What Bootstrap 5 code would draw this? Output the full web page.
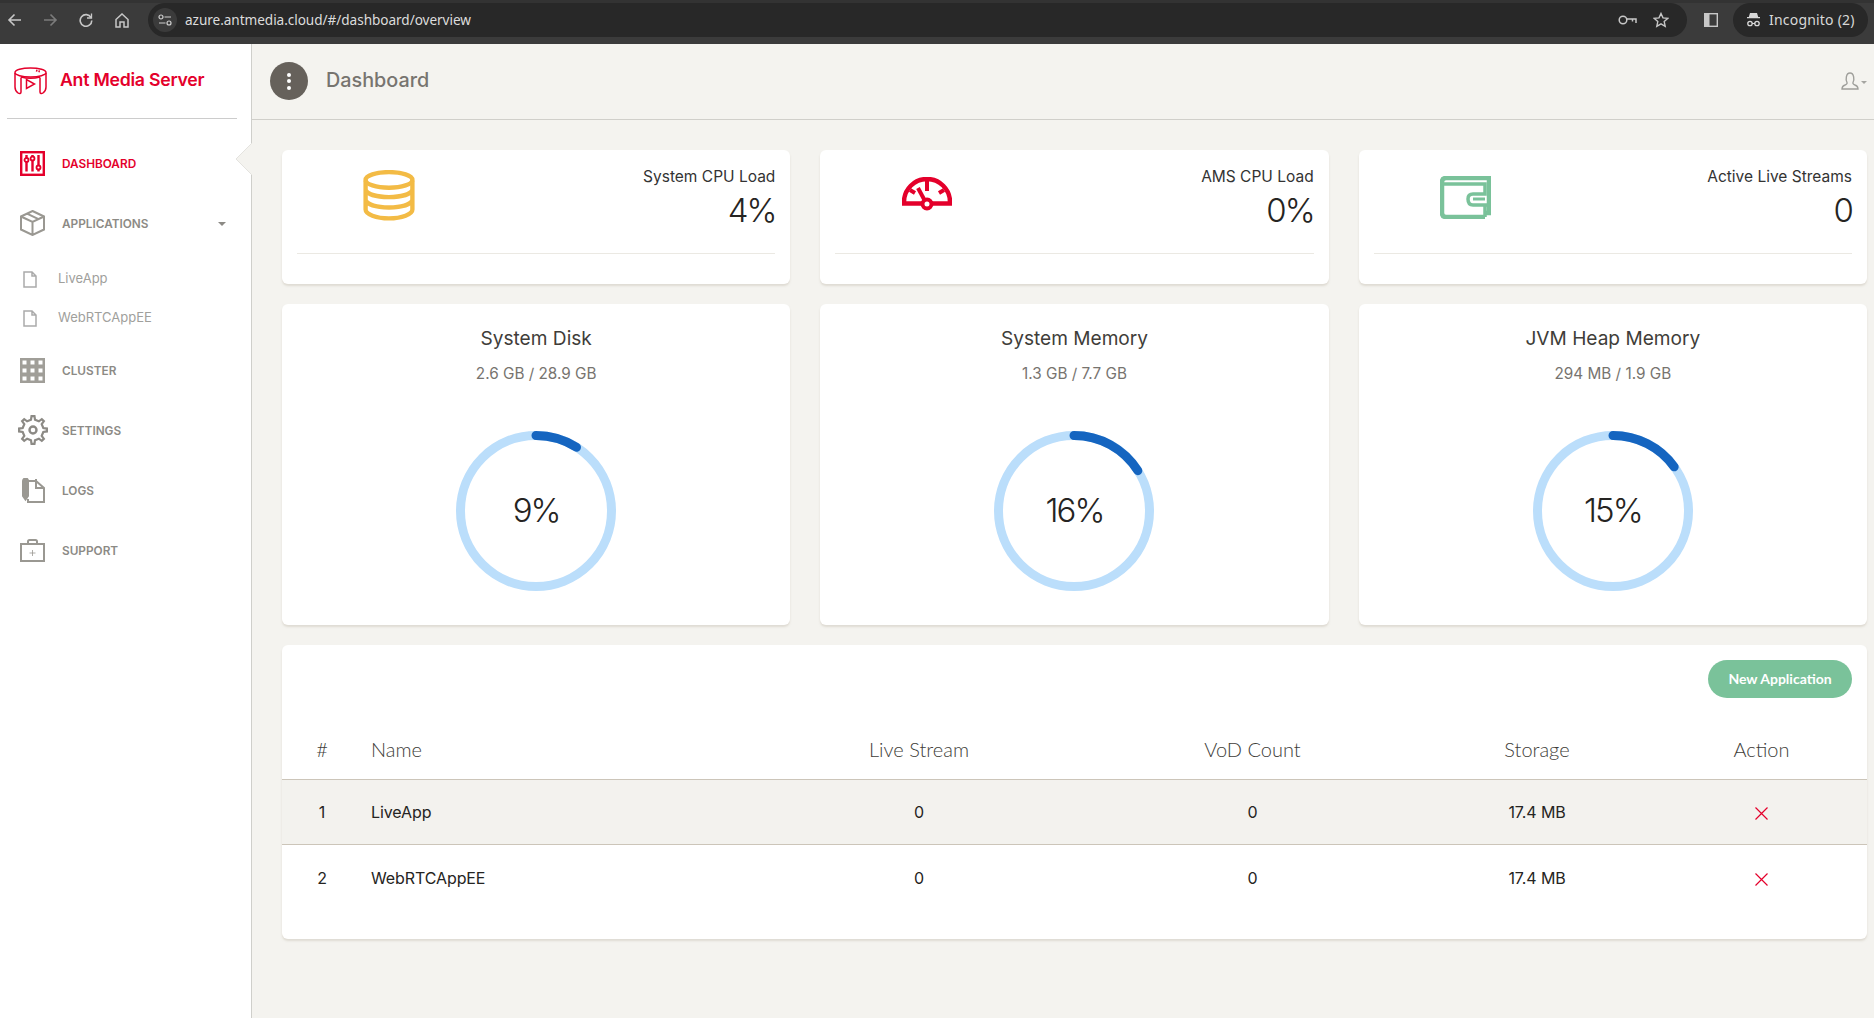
<!doctype html>
<html lang="en">
<head>
<meta charset="utf-8">
<title>Ant Media Server</title>
<link rel="stylesheet" href="https://cdn.jsdelivr.net/npm/bootstrap@5.3.0/dist/css/bootstrap.min.css">
<style>
html,body{height:100%;overflow:hidden}
body{background:#f4f3ef;font-family:"Inter","Liberation Sans",sans-serif;color:#252422}
.chrome-bar{height:44px;background:#3b3b3b;border-top:3px solid #333;padding-bottom:7px;color:#c7c7c7;font-family:"Noto Sans",sans-serif;padding-right:6px}
.chrome-nav{width:36px;flex:none}
.chrome-nav.first{width:32px;padding-right:4px}
.url-pill{flex:1;height:34px;margin-left:8px;background:#282828;border-radius:17px;padding-left:5px;padding-right:14px}
.tune-dot{width:24px;height:24px;border-radius:50%;background:#3b3b3b;margin-right:8px}
.url-text{font-size:13.6px;color:#dcdcdc;letter-spacing:-.05px}
.side-toggle{width:46px;padding-left:2px}
.inc-pill{height:34px;background:#282828;border-radius:17px;width:135px;padding-left:13px;padding-bottom:1px;font-size:14px;letter-spacing:.2px;color:#d8d8d8;gap:8px}
.side-panel{width:252px;flex:none;background:#fff;border-right:1px solid #cfcfcb;position:relative}
.side-notch{position:absolute;left:235px;top:99px}
.brand-box{height:75px;margin:0 14px 0 7px;padding-left:7px;border-bottom:1px solid #ccc;gap:13px}
.brand-text{font-size:17.7px;font-weight:600;color:#e4002b;letter-spacing:-.25px;font-family:"Inter",sans-serif;padding-bottom:1px}
.menu-wrap{padding-top:14px}
.menu-link{height:60px;padding-left:20px;padding-top:3px;color:#8c8a85;font-size:11.8px;font-weight:600;text-decoration:none;position:relative}
.menu-link .ico{width:25px;display:flex;justify-content:center;flex:none;margin-right:17px;margin-top:-3px}
.menu-link .ico svg{flex:none}
.menu-link.is-active{color:#e4002b}
.menu-caret{position:absolute;left:218px;top:29px;border:4px solid transparent;border-top-color:#8c8a85;border-bottom:0}
.sub-wrap{padding:5.5px 0 3.5px}
.sub-link{height:39px;padding-left:23px;padding-top:2px;color:#a0a09c;font-size:13px;text-decoration:none}
.sub-link svg{margin-right:21px}
.main-panel{flex:1;min-width:0}
.top-head{height:76px;border-bottom:1px solid #d0cfca;padding:0 7px 1px 18px}
.dots-btn{width:38px;height:38px;border-radius:50%;background:#66615b;border:0;gap:2.5px;padding:0}
.dots-btn i{width:4px;height:4px;background:#fff;border-radius:50%;display:block}
.head-title{font-size:19.8px;font-weight:550;color:#77746f;margin:0 0 0 18px}
.head-user{gap:2px}
.head-caret{border:3.5px solid transparent;border-top-color:#a5a5a1;border-bottom:0;margin-top:2px}
.page-body{padding:30px 7px 0 30px}
.card-grid{--bs-gutter-x:30px;--bs-gutter-y:20px}
.paper{background:#fff;border:0;border-radius:6px;box-shadow:0 2px 2px rgba(204,197,185,.5)}
.stat-paper{height:134px;padding:0 15px}
.stat-top{height:104px;border-bottom:1px solid #ebe9e3;padding-top:16px}
.stat-icon{width:52px;margin-left:66px;height:54px;margin-top:4px}
.stat-icon.gauge-ico{margin-top:11px;margin-left:67px}
.stat-icon.wallet-ico{margin-top:10px}
.stat-icon svg{display:block}
.stat-text{padding-top:1px}
.stat-label{font-size:15.5px;line-height:20px;color:#333}
.stat-value{font-size:33px;font-weight:350;line-height:40px;margin-top:3px;color:#252422;letter-spacing:-2px}
.gauge-paper{height:321px;text-align:center;padding-top:21px}
.gauge-title{font-size:19.1px;line-height:26px;color:#403d39;font-weight:400;margin:0}
.gauge-sub{font-size:15.3px;line-height:22px;color:#77746f;margin:12px 0 0}
.gauge-ring{width:160px;height:160px;margin:46px auto 0;position:relative}
.gauge-ring svg{display:block}
.gauge-num{font-size:33px;font-weight:350;color:#252422;letter-spacing:-2px}
.table-paper{height:294px;padding-top:15px}
.new-btn{background:#7ac29a;border:0;color:#fff;font-family:"Lato",sans-serif;font-weight:700;font-size:14px;height:38px;width:144px;border-radius:19px;padding:0 0 2px;margin-right:15px}
.new-btn:hover{background:#7ac29a;color:#fff}
.app-table{table-layout:fixed;width:100%;margin:22px 0 0;--bs-table-bg:transparent;--bs-table-color:#252422}
.app-table th{font-family:"Lato",sans-serif;font-weight:300;font-size:20px;color:#403d39;height:59px;vertical-align:middle;padding:0;border-bottom:1px solid #ccc5b9}
.app-table td{height:65.5px;font-size:16px;vertical-align:middle;padding:1px 0 0;border-bottom:1px solid #ccc5b9;letter-spacing:-.1px}
.app-table tr:last-child td{border-bottom:0;padding-top:0}
.app-table tbody tr:first-child td{background:#f3f2ee}
.cell-name{padding-left:9px !important}
</style>
</head>
<body>
<div class="d-flex flex-column vh-100">
  <div class="chrome-bar d-flex align-items-center">
    <div class="chrome-nav first d-flex justify-content-center"><svg width="15" height="14" viewBox="0 0 15 14" fill="none" stroke="#c7c7c7" stroke-width="1.6"><path d="M14 7H2M7.5 1.5 2 7l5.5 5.5"/></svg></div>
    <div class="chrome-nav d-flex justify-content-center"><svg width="15" height="14" viewBox="0 0 15 14" fill="none" stroke="#7c7c7c" stroke-width="1.6"><path d="M1 7h12M7.500 1.500 13 7l-5.500 5.500"/></svg></div>
    <div class="chrome-nav d-flex justify-content-center"><svg width="14" height="14" viewBox="0 0 14 14" fill="none" stroke="#c7c7c7" stroke-width="1.6"><path d="M12 4.500A5.800 5.800 0 1 0 12.800 7.500"/><path d="M12.500 .5v4.500H8" stroke-width="1.300"/></svg></div>
    <div class="chrome-nav d-flex justify-content-center"><svg width="14" height="15" viewBox="0 0 14 15" fill="none" stroke="#c7c7c7" stroke-width="1.500"><path d="M1 6.500 7 1l6 5.500V14H9V9H5v5H1z"/></svg></div>
    <div class="url-pill d-flex align-items-center">
      <div class="tune-dot d-flex align-items-center justify-content-center"><svg width="14" height="12" viewBox="0 0 14 12" fill="none" stroke="#d0d0d0" stroke-width="1.200"><circle cx="3" cy="3" r="2"/><path d="M6.500 3H13M1 9h6.500"/><circle cx="11" cy="9" r="2"/></svg></div>
      <span class="url-text">azure.antmedia.cloud/#/dashboard/overview</span>
      <svg class="ms-auto me-3" width="19" height="11" viewBox="0 0 19 11" fill="none" stroke="#c7c7c7" stroke-width="1.500"><circle cx="5" cy="5" r="3.800"/><path d="M9 4h9v4M14.500 4v2.500"/></svg>
      <svg class="me-1" width="16" height="16" viewBox="0 0 16 16" fill="none" stroke="#c7c7c7" stroke-width="1.400"><path d="m8 1.500 2 4.400 4.700.5-3.500 3.200 1 4.700L8 11.900l-4.200 2.400 1-4.700L1.300 6.400 6 5.900z"/></svg>
    </div>
    <div class="side-toggle d-flex justify-content-center"><svg width="14" height="14" viewBox="0 0 14 14"><rect x=".7" y=".7" width="12.600" height="12.600" fill="none" stroke="#c7c7c7" stroke-width="1.400"/><rect x="1" y="1" width="4.500" height="12" fill="#c7c7c7"/></svg></div>
    <div class="inc-pill d-flex align-items-center"><svg width="15" height="15" viewBox="0 0 15 15" fill="#d8d8d8"><path d="M4 1h7l1.200 4H14v1.300H1V5h1.800z"/><circle cx="4" cy="11.500" r="2.200" fill="none" stroke="#d8d8d8" stroke-width="1.300"/><circle cx="11" cy="11.500" r="2.200" fill="none" stroke="#d8d8d8" stroke-width="1.300"/><path d="M6 11h3v1H6z"/></svg><span>Incognito (2)</span></div>
  </div>
  <div class="d-flex flex-grow-1 overflow-hidden">
    <aside class="side-panel">
      <svg class="side-notch" width="17" height="32" viewBox="0 0 17 32"><path d="M17 0 1 16l16 16z" fill="#f4f3ef"/><path d="M17 0 1 16l16 16" fill="none" stroke="#e4e3df"/></svg>
      <div class="brand-box d-flex align-items-center">
        <svg width="33" height="28" viewBox="0 0 33 28" fill="none" stroke="#e4002b" stroke-width="1.500"><ellipse cx="16.500" cy="5.500" rx="15.500" ry="4.500"/><path d="M1 6v14c0 3.500 1.500 5 3 6 1.500 1 3 .8 3-1V10.500M32 6v14c0 3.500-1.500 5-3 6-1.500 1-3 .8-3-1V10.500M7 10q9.500 2.500 19 0"/><path d="M12.500 12.500v9l8-4.500z"/><path d="M22 3.500l4 1" stroke-width="2" stroke-dasharray="1.500 1"/></svg>
        <span class="brand-text">Ant Media Server</span>
      </div>
      <nav class="menu-wrap nav flex-column flex-nowrap">
        <a class="menu-link is-active d-flex align-items-center" href="#"><span class="ico"><svg width="25" height="25" viewBox="0 0 25 25" fill="none" stroke="#e4002b"><rect x="1.200" y="1.200" width="22.600" height="22.600" stroke-width="2.400"/><g stroke-width="2.400"><path d="M6.500 4v16.500M12.500 4v16.500M18.500 4v16.500"/></g><g fill="#fff" stroke-width="1.800"><circle cx="6.500" cy="9" r="2"/><circle cx="12.500" cy="7.500" r="2"/><circle cx="18.500" cy="16.500" r="2"/></g></svg></span>DASHBOARD</a>
        <a class="menu-link d-flex align-items-center" href="#"><span class="ico"><svg width="25" height="26" viewBox="0 0 25 26" fill="none" stroke="#9a9892" stroke-width="2"><path d="M12.500 1 24 6.500v13L12.500 25 1 19.500v-13zM1 6.500 12.500 12 24 6.500M12.500 12v13M7 3.700l11.500 5.500"/></svg></span>APPLICATIONS<i class="menu-caret"></i></a>
        <div class="sub-wrap">
          <a class="sub-link d-flex align-items-center" href="#"><svg width="14" height="17" viewBox="0 0 14 17" fill="none" stroke="#aaa" stroke-width="1.500"><path d="M1 1h8l4 4v11H1zM9 1v4h4"/></svg>LiveApp</a>
          <a class="sub-link d-flex align-items-center" href="#"><svg width="14" height="17" viewBox="0 0 14 17" fill="none" stroke="#aaa" stroke-width="1.500"><path d="M1 1h8l4 4v11H1zM9 1v4h4"/></svg>WebRTCAppEE</a>
        </div>
        <a class="menu-link d-flex align-items-center" href="#"><span class="ico"><svg width="25" height="25" viewBox="0 0 25 25" fill-rule="evenodd"><path fill="#a09e98" d="M0 0h25v25H0zM2.500 2.500v4h4v-4zm8 0v4h4v-4zm8 0v4h4v-4zm-16 8v4h4v-4zm8 0v4h4v-4zm8 0v4h4v-4zm-16 8v4h4v-4zm8 0v4h4v-4zm8 0v4h4v-4z"/></svg></span>CLUSTER</a>
        <a class="menu-link d-flex align-items-center" href="#"><span class="ico"><svg width="30" height="30" viewBox="0 0 30 30" fill="none" stroke="#8c8a85" stroke-width="2.200"><polygon points="13,4.700 13.540,1.100 16.460,1.100 17,4.700 20.870,6.300 23.800,4.120 25.880,6.200 23.700,9.130 25.300,13 28.900,13.540 28.900,16.460 25.300,17 23.700,20.870 25.880,23.800 23.800,25.880 20.870,23.700 17,25.300 16.460,28.900 13.540,28.900 13,25.300 9.130,23.700 6.200,25.880 4.120,23.800 6.300,20.870 4.700,17 1.100,16.460 1.100,13.540 4.700,13 6.300,9.130 4.120,6.200 6.200,4.120 9.130,6.300"/><circle cx="15" cy="15" r="3.500" stroke-width="2.400"/></svg></span>SETTINGS</a>
        <a class="menu-link d-flex align-items-center" href="#"><span class="ico"><svg width="24" height="25" viewBox="0 0 24 25" fill="none" stroke="#9a9892" stroke-width="2"><path d="M7 3h8l8 7v14H7v-3"/><path d="M15 1v9h8"/><path d="M2 3a2.500 2.500 0 0 1 5 0v15l-2.500 3.500L2 18z" fill="#9a9892"/></svg></span>LOGS</a>
        <a class="menu-link d-flex align-items-center" href="#"><span class="ico"><svg width="25" height="23" viewBox="0 0 25 23" fill="none" stroke="#9a9892" stroke-width="2"><path d="M1 5h23v17H1zM8 5V2.500Q8 1 9.500 1h6Q17 1 17 2.500V5"/><path d="M12.500 11v6M9.500 14h6" stroke-width=".8"/></svg></span>SUPPORT</a>
      </nav>
    </aside>
    <main class="main-panel">
      <header class="top-head d-flex align-items-center">
        <button class="dots-btn d-flex flex-column align-items-center justify-content-center" type="button" aria-label="Menu"><i></i><i></i><i></i></button>
        <h1 class="head-title">Dashboard</h1>
        <div class="head-user ms-auto d-flex align-items-center"><svg width="18" height="18" viewBox="0 0 18 18" fill="none" stroke="#9f9f9b" stroke-width="1.400"><path d="M6 10.500C4.500 8 4.800 1 9 1s4.500 7 3 9.500c-.5 1 .5 1.800 2 2.500 2 .8 3 1.500 3 4H1c0-2.500 1-3.200 3-4 1.500-.7 2.500-1.500 2-2.500z"/></svg><i class="head-caret"></i></div>
      </header>
      <div class="page-body">
        <div class="row card-grid">
          <div class="col-4"><div class="card paper stat-paper"><div class="stat-top d-flex justify-content-between">
            <div class="stat-icon"><svg width="52" height="51" viewBox="0 0 50 49" fill="none" stroke="#f3bb45" stroke-width="4.200"><ellipse cx="25" cy="9.500" rx="22.500" ry="7.500"/><path d="M2.500 10v28c0 4.500 10 8.500 22.500 8.500s22.500-4 22.500-8.500V10M2.500 19c2 4.500 11 7 22.500 7s20.500-2.500 22.500-7M2.500 29c2 4.500 11 7 22.500 7s20.500-2.500 22.500-7"/></svg></div>
            <div class="stat-text text-end"><div class="stat-label">System CPU Load</div><div class="stat-value">4%</div></div>
          </div></div></div>
          <div class="col-4"><div class="card paper stat-paper"><div class="stat-top d-flex justify-content-between">
            <div class="stat-icon gauge-ico"><svg width="50" height="34" viewBox="0 0 50 34" fill="none" stroke="#e4002b" stroke-width="4.500"><path d="M2 26.500V25a23 23 0 0 1 46 0v1.500z"/><path d="M25 4v10M8 13l5 3M42 13l-5 3" stroke-width="4"/><path d="M16 11l7 13" stroke-width="4"/><circle cx="25" cy="27" r="4.500" fill="#fff" stroke-width="4"/></svg></div>
            <div class="stat-text text-end"><div class="stat-label">AMS CPU Load</div><div class="stat-value">0%</div></div>
          </div></div></div>
          <div class="col-4"><div class="card paper stat-paper"><div class="stat-top d-flex justify-content-between">
            <div class="stat-icon wallet-ico"><svg width="51" height="43" viewBox="0 0 51 43" fill="none" stroke="#7ac29a" stroke-width="4.500"><path d="M45 41H6q-4 0-4-4V6q0-4 4-4h43v35h-4"/><path d="M2 8h43v10H33q-5 0-5 5 0 6 5 6h16M45 29v12" stroke-width="3.500"/><path d="M33 23h12" stroke-width="3"/></svg></div>
            <div class="stat-text text-end"><div class="stat-label">Active Live Streams</div><div class="stat-value">0</div></div>
          </div></div></div>

          <div class="col-4"><div class="card paper gauge-paper">
            <h2 class="gauge-title">System Disk</h2><p class="gauge-sub">2.6 GB / 28.9 GB</p>
            <div class="gauge-ring"><svg width="160" height="160" viewBox="0 0 160 160" fill="none" stroke-width="9"><circle cx="80" cy="80" r="75.500" stroke="#bbdefb"/><circle cx="80" cy="80" r="75.500" stroke="#1565c0" stroke-linecap="round" stroke-dasharray="42.700 474.400" transform="rotate(-90 80 80)"/></svg><span class="gauge-num position-absolute top-50 start-50 translate-middle">9%</span></div>
          </div></div>
          <div class="col-4"><div class="card paper gauge-paper">
            <h2 class="gauge-title">System Memory</h2><p class="gauge-sub">1.3 GB / 7.7 GB</p>
            <div class="gauge-ring"><svg width="160" height="160" viewBox="0 0 160 160" fill="none" stroke-width="9"><circle cx="80" cy="80" r="75.500" stroke="#bbdefb"/><circle cx="80" cy="80" r="75.500" stroke="#1565c0" stroke-linecap="round" stroke-dasharray="75.900 474.400" transform="rotate(-90 80 80)"/></svg><span class="gauge-num position-absolute top-50 start-50 translate-middle">16%</span></div>
          </div></div>
          <div class="col-4"><div class="card paper gauge-paper">
            <h2 class="gauge-title">JVM Heap Memory</h2><p class="gauge-sub">294 MB / 1.9 GB</p>
            <div class="gauge-ring"><svg width="160" height="160" viewBox="0 0 160 160" fill="none" stroke-width="9"><circle cx="80" cy="80" r="75.500" stroke="#bbdefb"/><circle cx="80" cy="80" r="75.500" stroke="#1565c0" stroke-linecap="round" stroke-dasharray="71.200 474.400" transform="rotate(-90 80 80)"/></svg><span class="gauge-num position-absolute top-50 start-50 translate-middle">15%</span></div>
          </div></div>

          <div class="col-12"><div class="card paper table-paper">
            <div class="d-flex justify-content-end"><button class="btn new-btn" type="button">New Application</button></div>
            <table class="table app-table text-center">
              <colgroup><col style="width:80px"><col style="width:389px"><col style="width:336px"><col style="width:331px"><col style="width:238px"><col style="width:211px"></colgroup>
              <thead><tr><th>#</th><th class="text-start cell-name">Name</th><th>Live Stream</th><th>VoD Count</th><th>Storage</th><th>Action</th></tr></thead>
              <tbody>
                <tr><td>1</td><td class="text-start cell-name">LiveApp</td><td>0</td><td>0</td><td>17.4 MB</td><td><svg width="13" height="13" viewBox="0 0 13 13" stroke="#e4002b" stroke-width="1.200"><path d="M.5.5l12 12M12.500.5l-12 12"/></svg></td></tr>
                <tr><td>2</td><td class="text-start cell-name">WebRTCAppEE</td><td>0</td><td>0</td><td>17.4 MB</td><td><svg width="13" height="13" viewBox="0 0 13 13" stroke="#e4002b" stroke-width="1.200"><path d="M.5.5l12 12M12.500.5l-12 12"/></svg></td></tr>
              </tbody>
            </table>
          </div></div>
        </div>
      </div>
    </main>
  </div>
</div>
<script src="https://cdn.jsdelivr.net/npm/bootstrap@5.3.0/dist/js/bootstrap.bundle.min.js"></script>
</body>
</html>
